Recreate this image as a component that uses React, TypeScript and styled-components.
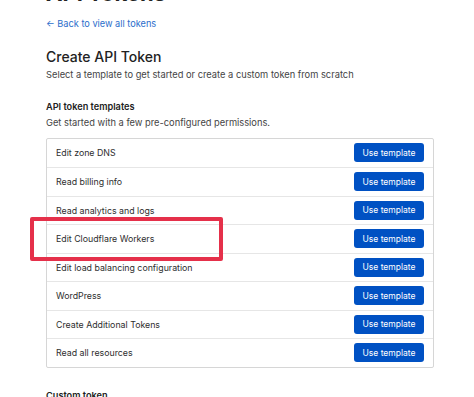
import React from 'react';
import styled, { createGlobalStyle } from 'styled-components';

const GlobalStyle = createGlobalStyle`
  html, body {
    margin: 0;
    padding: 0;
    background: #ffffff;
  }
  body {
    font-family: Inter, "Liberation Sans", sans-serif;
    color: #313131;
    overflow: hidden;
  }
`;

const Page = styled.main`
  position: relative;
  padding: 0 40px 0 46px;
  width: 388px;
`;

const PageTitle = styled.h1`
  margin: -18px 0 0;
  font-size: 22px;
  line-height: 22px;
  font-weight: 700;
  color: #222;
`;

const BackLink = styled.a`
  display: block;
  margin-top: 14px;
  font-size: 9.2px;
  line-height: 12px;
  color: #2c6ecb;
  text-decoration: none;
`;

const SectionTitle = styled.h2`
  margin: 18px 0 0;
  font-size: 14px;
  line-height: 18px;
  font-weight: 500;
  color: #222;
`;

const Subtitle = styled.p<{ $top?: number }>`
  margin: ${(p) => p.$top ?? 3}px 0 0;
  font-size: 9.3px;
  line-height: 12px;
  color: #444;
`;

const GroupTitle = styled.h3<{ $top: number }>`
  margin: ${(p) => p.$top}px 0 0;
  font-size: 9.2px;
  line-height: 12px;
  font-weight: 600;
  color: #222;
`;

const Table = styled.div`
  margin-top: 8.5px;
  border: 1px solid #d6d6d6;
  border-radius: 2px;
  display: flex;
  flex-direction: column;
`;

const Row = styled.div`
  height: 28.5px;
  box-sizing: border-box;
  display: flex;
  align-items: center;
  justify-content: space-between;
  padding: 0 9px 0 9px;
  border-top: 1px solid #e6e6e6;
  &:first-child {
    border-top: none;
  }
`;

const RowLabel = styled.span`
  font-size: 8.8px;
  color: #2e2e2e;
`;

const TemplateButton = styled.button`
  width: 70px;
  height: 19px;
  border: none;
  border-radius: 3px;
  background: #0051c3;
  color: #ffffff;
  font-family: inherit;
  font-size: 8.5px;
  padding: 0;
  cursor: pointer;
`;

const Highlight = styled.div`
  position: absolute;
  left: 30px;
  top: 217px;
  width: 193px;
  height: 44px;
  box-sizing: border-box;
  border: 4px solid #e5304a;
  border-radius: 2px;
  pointer-events: none;
`;

const templates = [
  'Edit zone DNS',
  'Read billing info',
  'Read analytics and logs',
  'Edit Cloudflare Workers',
  'Edit load balancing configuration',
  'WordPress',
  'Create Additional Tokens',
  'Read all resources',
];

export default function App() {
  return (
    <>
      <GlobalStyle />
      <Page>
        <PageTitle>API Tokens</PageTitle>
        <BackLink href="#">← Back to view all tokens</BackLink>
        <SectionTitle>Create API Token</SectionTitle>
        <Subtitle>Select a template to get started or create a custom token from scratch</Subtitle>
        <GroupTitle $top={20}>API token templates</GroupTitle>
        <Subtitle $top={4}>Get started with a few pre-configured permissions.</Subtitle>
        <Table>
          {templates.map((t) => (
            <Row key={t}>
              <RowLabel>{t}</RowLabel>
              <TemplateButton>Use template</TemplateButton>
            </Row>
          ))}
        </Table>
        <GroupTitle $top={22}>Custom token</GroupTitle>
      </Page>
      <Highlight />
    </>
  );
}
